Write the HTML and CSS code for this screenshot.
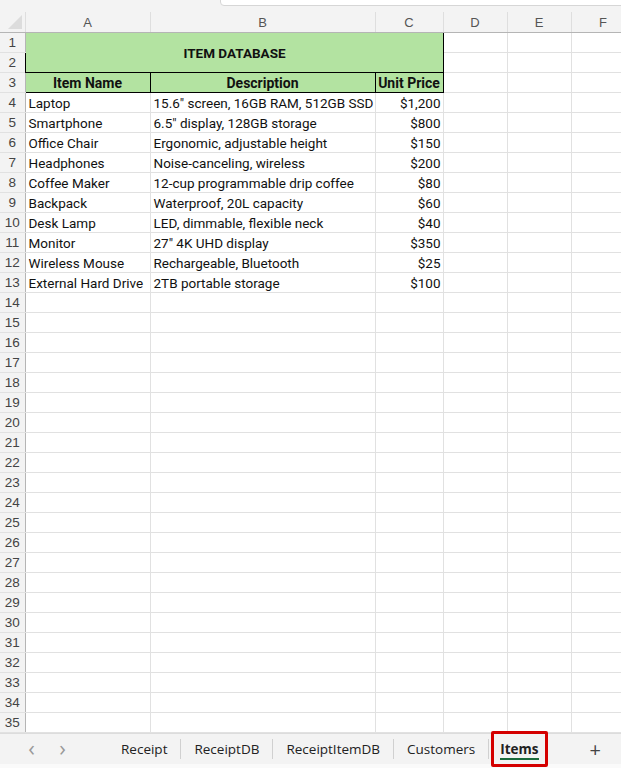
FILE: index.html
```html
<!DOCTYPE html>
<html lang="en">
<head>
  <meta charset="utf-8">
  <title>Items</title>
  <link rel="stylesheet" href="styles.css">
</head>
<body>
  <div class="topbar"><div class="formula"></div></div>
  <div class="grid-wrap">
    <table class="sheet">
      <colgroup>
        <col class="c-rh"><col class="c-a"><col class="c-b"><col class="c-c"><col class="c-d"><col class="c-e"><col class="c-f">
      </colgroup>
      <tr class="colhead">
        <th class="corner"><span class="tri"></span></th><th>A</th><th>B</th><th>C</th><th>D</th><th>E</th><th>F</th>
      </tr>
      <tr><th>1</th><td class="title" colspan="3" rowspan="2">ITEM DATABASE</td><td></td><td></td><td></td></tr>
      <tr><th>2</th><td></td><td></td><td></td></tr>
      <tr><th>3</th><td class="hd">Item Name</td><td class="hd">Description</td><td class="hd">Unit Price</td><td></td><td></td><td></td></tr>
      <tr><th>4</th><td>Laptop</td><td>15.6" screen, 16GB RAM, 512GB SSD</td><td class="num">$1,200</td><td></td><td></td><td></td></tr>
      <tr><th>5</th><td>Smartphone</td><td>6.5" display, 128GB storage</td><td class="num">$800</td><td></td><td></td><td></td></tr>
      <tr><th>6</th><td>Office Chair</td><td>Ergonomic, adjustable height</td><td class="num">$150</td><td></td><td></td><td></td></tr>
      <tr><th>7</th><td>Headphones</td><td>Noise-canceling, wireless</td><td class="num">$200</td><td></td><td></td><td></td></tr>
      <tr><th>8</th><td>Coffee Maker</td><td>12-cup programmable drip coffee</td><td class="num">$80</td><td></td><td></td><td></td></tr>
      <tr><th>9</th><td>Backpack</td><td>Waterproof, 20L capacity</td><td class="num">$60</td><td></td><td></td><td></td></tr>
      <tr><th>10</th><td>Desk Lamp</td><td>LED, dimmable, flexible neck</td><td class="num">$40</td><td></td><td></td><td></td></tr>
      <tr><th>11</th><td>Monitor</td><td>27" 4K UHD display</td><td class="num">$350</td><td></td><td></td><td></td></tr>
      <tr><th>12</th><td>Wireless Mouse</td><td>Rechargeable, Bluetooth</td><td class="num">$25</td><td></td><td></td><td></td></tr>
      <tr><th>13</th><td>External Hard Drive</td><td>2TB portable storage</td><td class="num">$100</td><td></td><td></td><td></td></tr>
      <tr><th>14</th><td></td><td></td><td></td><td></td><td></td><td></td></tr>
      <tr><th>15</th><td></td><td></td><td></td><td></td><td></td><td></td></tr>
      <tr><th>16</th><td></td><td></td><td></td><td></td><td></td><td></td></tr>
      <tr><th>17</th><td></td><td></td><td></td><td></td><td></td><td></td></tr>
      <tr><th>18</th><td></td><td></td><td></td><td></td><td></td><td></td></tr>
      <tr><th>19</th><td></td><td></td><td></td><td></td><td></td><td></td></tr>
      <tr><th>20</th><td></td><td></td><td></td><td></td><td></td><td></td></tr>
      <tr><th>21</th><td></td><td></td><td></td><td></td><td></td><td></td></tr>
      <tr><th>22</th><td></td><td></td><td></td><td></td><td></td><td></td></tr>
      <tr><th>23</th><td></td><td></td><td></td><td></td><td></td><td></td></tr>
      <tr><th>24</th><td></td><td></td><td></td><td></td><td></td><td></td></tr>
      <tr><th>25</th><td></td><td></td><td></td><td></td><td></td><td></td></tr>
      <tr><th>26</th><td></td><td></td><td></td><td></td><td></td><td></td></tr>
      <tr><th>27</th><td></td><td></td><td></td><td></td><td></td><td></td></tr>
      <tr><th>28</th><td></td><td></td><td></td><td></td><td></td><td></td></tr>
      <tr><th>29</th><td></td><td></td><td></td><td></td><td></td><td></td></tr>
      <tr><th>30</th><td></td><td></td><td></td><td></td><td></td><td></td></tr>
      <tr><th>31</th><td></td><td></td><td></td><td></td><td></td><td></td></tr>
      <tr><th>32</th><td></td><td></td><td></td><td></td><td></td><td></td></tr>
      <tr><th>33</th><td></td><td></td><td></td><td></td><td></td><td></td></tr>
      <tr><th>34</th><td></td><td></td><td></td><td></td><td></td><td></td></tr>
      <tr><th>35</th><td></td><td></td><td></td><td></td><td></td><td></td></tr>
    </table>
  </div>
  <div class="tabs">
    <span class="nav">&lsaquo;</span>
    <span class="nav">&rsaquo;</span>
    <div class="tablist">
      <span class="tab">Receipt</span>
      <span class="tab">ReceiptDB</span>
      <span class="tab">ReceiptItemDB</span>
      <span class="tab">Customers</span>
      <span class="tab active"><span class="lbl">Items</span></span>
    </div>
    <span class="plus">+</span>
  </div>
</body>
</html>
```
FILE: styles.css
```css
html, body { margin: 0; padding: 0; }
body { width: 621px; height: 768px; overflow: hidden; background: #fff; font-family: "Open Sans", "Noto Sans", sans-serif; }

.topbar { height: 12px; background: #f3f3f3; position: relative; overflow: hidden; }
.formula { position: absolute; left: 220px; right: -10px; top: -12px; height: 16px; background: #fff; border: 1px solid #d6d6d6; border-radius: 4px; }

.grid-wrap { height: 721px; overflow: hidden; background: #f3f3f3; }
.sheet { border-collapse: collapse; table-layout: fixed; width: 635px; font-family: Roboto, "Liberation Sans", sans-serif; font-size: 13.5px; color: #111; }
.c-rh { width: 25px; }
.c-a { width: 125px; }
.c-b { width: 225px; }
.c-c { width: 68px; }
.c-d, .c-e, .c-f { width: 64px; }

.sheet tr { height: 20px; }
.sheet th, .sheet td { height: 18px; padding: 1px 2px 0 3px; white-space: nowrap; overflow: hidden; line-height: 18px; }
.sheet td { border: 1px solid #e1e1e1; background: #fff; }
.sheet th { background: #f3f3f3; color: #444; font-family: "Liberation Sans", Arial, sans-serif; font-weight: normal; font-size: 13.5px; text-align: center; padding: 1px 0 0; border-bottom: 1px solid #e1e1e1; border-right: 1px solid #b5b5b5; }

.colhead { height: 21px; }
.colhead th { height: 19px; border-right: 1px solid #dedede; border-bottom: 1px solid #b5b5b5; color: #555; font-size: 13px; }
.colhead th.corner { border-right: 1px solid #dedede; position: relative; }
.tri { position: absolute; right: 3px; bottom: 3px; width: 0; height: 0; border-left: 14px solid transparent; border-bottom: 14px solid #dcdcdc; }

.sheet td.title { background: #b3e3a1; border: 1px solid #000; text-align: center; font-weight: bold; font-size: 13.5px; }
.sheet td.hd { background: #b3e3a1; border: 1px solid #000; text-align: center; font-weight: bold; font-size: 14px; padding: 1px 1px 0; }
.sheet td.num { text-align: right; }

.tabs { height: 30px; border-top: 1px solid #dcdcdc; border-bottom: 5px solid #fafafa; background: #f3f3f3; display: flex; align-items: center; font-size: 13.5px; color: #222; }
.nav { width: 31px; text-align: center; color: #999; font-size: 22px; line-height: 20px; margin-top: -4px; }
.nav:first-child { margin-left: 16px; }
.tablist { display: flex; align-items: center; margin-left: 30px; }
.tab { padding: 0 13px; border-right: 1px solid #d0d0d0; line-height: 20px; }
.tab.active { border: 3px solid #d40000; border-radius: 2px; padding: 0 6px; height: 30px; display: flex; align-items: center; margin-left: 2px; margin-top: -6px; margin-bottom: -6px; }
.tab.active .lbl { font-weight: bold; border-bottom: 2px solid #1a6b3c; line-height: 18px; color: #222; margin-top: 2px; }
.plus { margin-left: auto; margin-right: 20px; font-size: 20px; color: #444; }
```
